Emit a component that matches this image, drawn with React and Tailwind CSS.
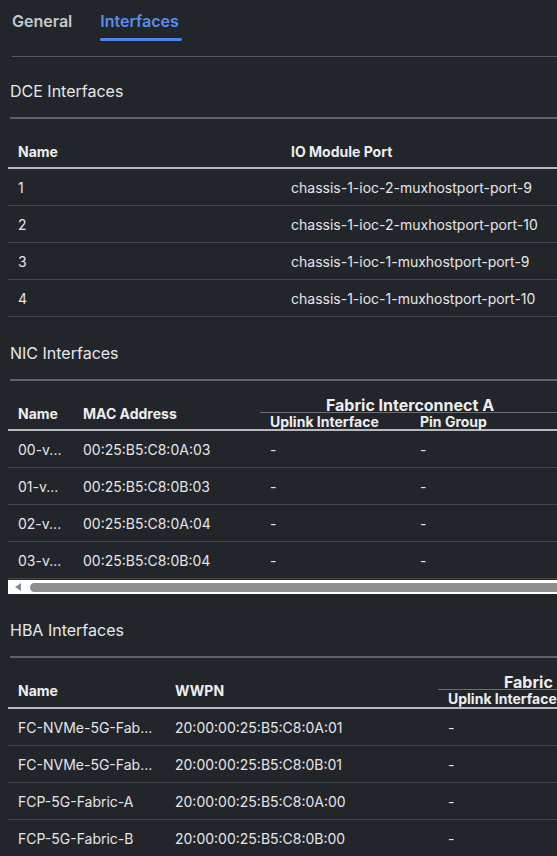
import React from 'react';

const dceRows = [
  ['1', 'chassis-1-ioc-2-muxhostport-port-9'],
  ['2', 'chassis-1-ioc-2-muxhostport-port-10'],
  ['3', 'chassis-1-ioc-1-muxhostport-port-9'],
  ['4', 'chassis-1-ioc-1-muxhostport-port-10'],
];

const nicRows = [
  ['00-v...', '00:25:B5:C8:0A:03'],
  ['01-v...', '00:25:B5:C8:0B:03'],
  ['02-v...', '00:25:B5:C8:0A:04'],
  ['03-v...', '00:25:B5:C8:0B:04'],
];

const hbaRows = [
  ['FC-NVMe-5G-Fab...', '20:00:00:25:B5:C8:0A:01'],
  ['FC-NVMe-5G-Fab...', '20:00:00:25:B5:C8:0B:01'],
  ['FCP-5G-Fabric-A', '20:00:00:25:B5:C8:0A:00'],
  ['FCP-5G-Fabric-B', '20:00:00:25:B5:C8:0B:00'],
];

const SectionTitle = ({ children, className = '' }) => (
  <div className={className}>
    <h2 className="pl-[10px] text-[16px] leading-[24px] text-[#e6e8eb]">{children}</h2>
    <div className="ml-[10px] mt-[14px] h-[2px] bg-[#5f6267]" />
  </div>
);

const FabricGroup = ({ title }) => (
  <div className="w-[300px] shrink-0 flex flex-col">
    <div className="h-[16px] pt-[1px] border-b border-[#6b6e73] text-center text-[16px] font-bold leading-[15px] text-[#eceef0] whitespace-nowrap">
      {title}
    </div>
    <div className="flex h-[16px] pt-[2px] items-center text-[14px] font-bold leading-[14px] text-[#eceef0]">
      <div className="w-[150px] px-[10px] whitespace-nowrap">Uplink Interface</div>
      <div className="w-[150px] px-[10px] whitespace-nowrap">Pin Group</div>
    </div>
  </div>
);

const App = () => {
  return (
    <div
      className="w-[557px] h-[856px] overflow-hidden bg-[#22252a] text-[#e4e6e9]"
      style={{ fontFamily: 'Inter, "Noto Sans", sans-serif' }}
    >
      {/* Tabs */}
      <div className="ml-3 h-[57px] border-b border-[#55585d] flex gap-[28px]">
        <div className="pt-[9px] text-[16px] leading-[24px] font-semibold text-[#c6c9cd]">General</div>
        <div className="pt-[9px] flex flex-col">
          <span className="text-[16px] leading-[24px] font-semibold text-[#5b8ee8]">Interfaces</span>
          <span className="mt-[5px] h-[3px] w-[82px] rounded-full bg-[#4f86e3]" />
        </div>
      </div>

      {/* DCE */}
      <SectionTitle className="mt-[22px]">DCE Interfaces</SectionTitle>
      <div className="ml-2 mt-4 w-[700px]">
        <div className="flex h-[34px] items-center border-b-2 border-[#b6b9bd] text-[14px] font-bold text-[#eceef0]">
          <div className="w-[273px] px-[10px]">Name</div>
          <div className="px-[10px]">IO Module Port</div>
        </div>
        {dceRows.map(([name, port]) => (
          <div key={name} className="flex h-[37px] items-center border-b border-[#45484d] text-[14px]">
            <div className="w-[273px] px-[10px]">{name}</div>
            <div className="px-[10px] whitespace-nowrap">{port}</div>
          </div>
        ))}
      </div>

      {/* NIC */}
      <SectionTitle className="mt-[24px]">NIC Interfaces</SectionTitle>
      <div className="ml-2 mt-4 w-[560px]">
        <div className="flex h-[34px] border-b-2 border-[#b6b9bd] text-[14px] font-bold text-[#eceef0]">
          <div className="w-[65px] shrink-0 px-[10px] flex items-center">Name</div>
          <div className="w-[187px] shrink-0 px-[10px] flex items-center">MAC Address</div>
          <FabricGroup title="Fabric Interconnect A" />
        </div>
        {nicRows.map(([name, mac]) => (
          <div key={name} className="flex h-[37px] items-center border-b border-[#45484d] text-[14px]">
            <div className="w-[65px] shrink-0 px-[10px] whitespace-nowrap">{name}</div>
            <div className="w-[187px] shrink-0 px-[10px]">{mac}</div>
            <div className="w-[150px] shrink-0 px-[10px]">-</div>
            <div className="w-[150px] shrink-0 px-[10px]">-</div>
          </div>
        ))}
      </div>
      {/* horizontal scrollbar */}
      <div className="ml-2 mt-[1px] h-[14px] bg-white flex items-center">
        <svg width="22" height="14" viewBox="0 0 22 14" className="shrink-0">
          <path d="M7 7 L13 3 L13 11 Z" fill="#7d8b98" />
        </svg>
        <div className="h-[9px] flex-1 rounded-l-full bg-[#8e8e8e]" />
      </div>

      {/* HBA */}
      <SectionTitle className="mt-[24px]">HBA Interfaces</SectionTitle>
      <div className="ml-2 mt-4 w-[730px]">
        <div className="flex h-[35px] border-b-2 border-[#b6b9bd] text-[14px] font-bold text-[#eceef0]">
          <div className="w-[157px] shrink-0 px-[10px] flex items-center">Name</div>
          <div className="w-[273px] shrink-0 px-[10px] flex items-center">WWPN</div>
          <FabricGroup title="Fabric Interconnect A" />
        </div>
        {hbaRows.map(([name, wwpn], i) => (
          <div key={i} className="flex h-[37px] items-center border-b border-[#45484d] text-[14px]">
            <div className="w-[157px] shrink-0 px-[10px] whitespace-nowrap">{name}</div>
            <div className="w-[273px] shrink-0 px-[10px]">{wwpn}</div>
            <div className="w-[150px] shrink-0 px-[10px]">-</div>
            <div className="w-[150px] shrink-0 px-[10px]">-</div>
          </div>
        ))}
      </div>
    </div>
  );
};

export default App;
